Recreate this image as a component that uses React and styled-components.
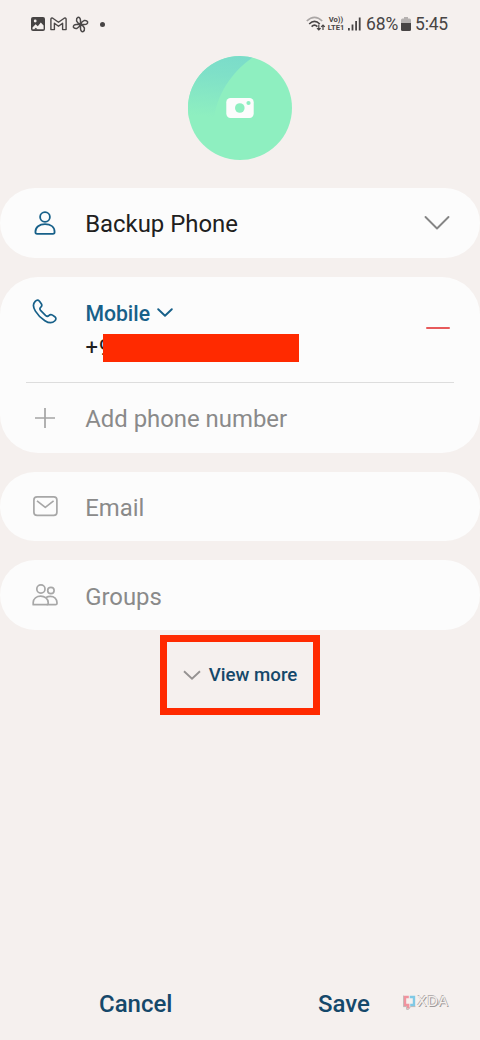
import React from 'react'
import styled, { createGlobalStyle } from 'styled-components'

function Field({icon, label, filled, arrow}) {
    return (
        <Row>
            <IconSlot>{icon}</IconSlot>
            <Label $filled={filled}>{label}</Label>
            {arrow &&
                <Chevron width="26" height="15" viewBox="0 0 26 15">
                    <path d="M1.5 2 L13 13.5 L24.5 2" stroke="#858585" strokeWidth="1.9" />
                </Chevron>
            }
        </Row>
    )
}

function StatusBar() {
    return (
        <Status>
            <Notifications>
                <svg width="14" height="14" viewBox="0 0 14 14">
                    <rect width="14" height="14" rx="2" fill="#474444" />
                    <circle cx="4.2" cy="4" r="1.4" fill="#f5f0ee" />
                    <path d="M1.5 10.5 L4.6 7.3 L6.8 9.3 L9.8 5.6 L12.6 8.5 V12.3 H1.5 Z" fill="#f5f0ee" />
                    <path d="M3 12.4 L4.8 10.8 L6.7 12.4 Z" fill="#474444" />
                </svg>
                <svg width="17" height="14" viewBox="0 0 17 14" fill="none" stroke="#4b4848" strokeWidth="1.4" strokeLinejoin="round">
                    <path d="M.9 12.6 V2.1 Q1.1 .4 2.8 1.2 L8.5 5.3 L14.2 1.2 Q15.9 .4 16.1 2.1 V12.6 H12.6 V6.2 L8.5 9.2 L4.4 6.2 V12.6 Z" />
                </svg>
                <svg width="17" height="17" viewBox="0 0 17 17" fill="none" stroke="#4b4848" strokeWidth="1.5" strokeLinejoin="round">
                    <path d="M8.5 8.5 V4.5 Q8.3 1 5.8 1.4 Q4.2 2.2 4.6 5 Q5.5 7.4 8.5 8.5 Z" />
                    <path d="M8.5 8.5 H12.5 Q16 8.3 15.6 5.8 Q14.8 4.2 12 4.6 Q9.6 5.5 8.5 8.5 Z" />
                    <path d="M8.5 8.5 V12.5 Q8.7 16 11.2 15.6 Q12.8 14.8 12.4 12 Q11.5 9.6 8.5 8.5 Z" />
                    <path d="M8.5 8.5 H4.5 Q1 8.7 1.4 11.2 Q2.2 12.8 5 12.4 Q7.4 11.5 8.5 8.5 Z" />
                </svg>
                <Dot />
            </Notifications>
            <Indicators>
                <svg width="20" height="16" viewBox="0 0 20 16" fill="none" strokeWidth="1.7">
                    <path d="M.8 5 Q8.5 -2.3 16.2 5" stroke="#aaa6a5" />
                    <path d="M3.2 8 Q8.5 2.9 13.8 8" stroke="#474444" />
                    <path d="M5.6 10.6 Q8.5 7.8 11.4 10.6" stroke="#474444" />
                    <path d="M12.8 8.5 V14 M11 12.2 L12.8 14 L14.6 12.2 M17 14 V9 M15.2 10.8 L17 9 L18.8 10.8" stroke="#474444" strokeWidth="1.2" />
                </svg>
                <Volte>
                    <span>Vo))</span>
                    <span>LTE1</span>
                </Volte>
                <Signal width="13" height="14" viewBox="0 0 13 14" fill="#474444">
                    <rect x="0" y="11" width="1.8" height="2.5" />
                    <rect x="3.6" y="7.5" width="1.8" height="6" />
                    <rect x="7.2" y="4" width="1.8" height="9.5" />
                    <rect x="10.8" y="0.5" width="1.8" height="13" />
                </Signal>
                <Reading $width={37}>68%</Reading>
                <Battery width="10" height="14" viewBox="0 0 10 14">
                    <path d="M3 0 H7 V1.5 H8.5 Q10 1.5 10 3 V6 H0 V3 Q0 1.5 1.5 1.5 H3 Z" fill="#b5b1b0" />
                    <path d="M0 6 H10 V12.5 Q10 14 8.5 14 H1.5 Q0 14 0 12.5 Z" fill="#474444" />
                </Battery>
                <Reading $width={37}>5:45</Reading>
            </Indicators>
        </Status>
    )
}

const PersonIcon = () => (
    <svg width="22" height="24" viewBox="0 0 22 24" fill="none" stroke="#176089" strokeWidth="1.8">
        <circle cx="11" cy="6" r="4.9" />
        <path d="M1.4 21 C1.4 16 5.4 13.2 11 13.2 S20.6 16 20.6 21 Q20.6 22.9 18.9 22.9 H3.1 Q1.4 22.9 1.4 21 Z" />
    </svg>
)

const PhoneIcon = () => (
    <svg width="26" height="26" viewBox="0 0 26 26" fill="none" stroke="#176089" strokeWidth="1.7" strokeLinejoin="round">
        <path d="M3.2 2.3 C4.8 .7 6.2 .7 7.5 2.2 L9.3 4.7 C10.2 6.1 9.8 7.4 8.6 8.4 C7.5 9.4 7.7 10.4 8.8 11.7 L13.5 16.3 C14.8 17.5 15.8 17.6 16.8 16.6 C17.9 15.5 19.1 15.2 20.5 16.1 L22.8 17.7 C24.3 19 24.3 20.5 22.7 22 C20.2 24.4 16.6 24.1 12.9 21.7 C9.3 19.4 5.6 15.7 3.4 12.1 C1 8.2 .8 4.7 3.2 2.3 Z" />
    </svg>
)

const PlusIcon = () => (
    <svg width="22" height="22" viewBox="0 0 22 22" stroke="#a4a4a4" strokeWidth="1.7">
        <path d="M1 11 H21 M11 1 V21" />
    </svg>
)

const MailIcon = () => (
    <svg width="26" height="22" viewBox="0 0 26 22" fill="none" stroke="#a7a7a7" strokeWidth="1.7">
        <rect x="1.9" y="1.9" width="23" height="18.5" rx="3.2" />
        <path d="M5 5.9 L13.3 12.3 L21.6 5.9" strokeLinejoin="round" />
    </svg>
)

const GroupIcon = () => (
    <svg width="26" height="24" viewBox="0 0 26 24" fill="none" stroke="#a7a7a7" strokeWidth="1.7" strokeLinejoin="round">
        <circle cx="8.9" cy="6" r="4.1" />
        <circle cx="18.9" cy="7.5" r="3.2" />
        <path d="M1.2 21.7 V19.5 C1.5 15.8 4.6 13.2 8.7 13.2 S16 15.8 16.2 19.5 V20.2 Q16.2 21.7 14.8 21.7 Z" />
        <path d="M14 14.6 Q16 13.4 18.3 13.4 C22.3 13.4 24.9 16 25 19.8 V20.4 Q25 21.7 23.5 21.7 H14.8" />
    </svg>
)

function App() {
    return (
        <Screen>
            <GlobalStyle />
            <StatusBar />

            <Avatar>
                <svg width="104" height="104" viewBox="0 0 104 104">
                    <defs>
                        <linearGradient id="shade" x1="0.6" y1="0" x2="0.5" y2="1">
                            <stop offset="0" stopColor="#7bdcca" />
                            <stop offset="0.3" stopColor="#7fe0c8" />
                            <stop offset="1" stopColor="#8eefc0" />
                        </linearGradient>
                        <clipPath id="round"><circle cx="52" cy="52" r="52" /></clipPath>
                    </defs>
                    <g clipPath="url(#round)">
                        <rect width="104" height="104" fill="#8eefc0" />
                        <path d="M0 0 H67 C48 12 30 34 26 62 H0 Z" fill="url(#shade)" />
                    </g>
                    <rect x="38.3" y="42" width="27.4" height="20" rx="4.2" fill="#fcfcfc" />
                    <circle cx="51.8" cy="52" r="4.8" fill="#8eefc0" />
                    <circle cx="60.5" cy="47" r="2.1" fill="#8eefc0" />
                </svg>
            </Avatar>

            <Cards>
                <Card>
                    <Field icon={<PersonIcon />} label="Backup Phone" filled arrow />
                </Card>
                <Card>
                    <PhoneRow>
                        <IconSlot><PhoneIcon /></IconSlot>
                        <PhoneDetails>
                            <TypePicker>
                                Mobile
                                <svg width="16" height="10" viewBox="0 0 16 10" fill="none" stroke="#176089" strokeWidth="1.9">
                                    <path d="M1.2 1.2 L8 7.7 L14.8 1.2" strokeLinejoin="round" strokeLinecap="round" />
                                </svg>
                            </TypePicker>
                            <Number>
                                +9
                                <Redacted />
                            </Number>
                        </PhoneDetails>
                        <Remove />
                    </PhoneRow>
                    <Divider />
                    <Field icon={<PlusIcon />} label="Add phone number" />
                </Card>
                <Card>
                    <Field icon={<MailIcon />} label="Email" />
                </Card>
                <Card>
                    <Field icon={<GroupIcon />} label="Groups" />
                </Card>
            </Cards>

            <ViewMore>
                <svg width="18" height="11" viewBox="0 0 18 11" fill="none" stroke="#959291" strokeWidth="1.9">
                    <path d="M1 1.3 L9 8.6 L17 1.3" />
                </svg>
                View more
            </ViewMore>

            <Footer>
                <Action $left={99} $width={73}>Cancel</Action>
                <Action $left={146} $width={52}>Save</Action>
                <Brand>
                    <svg width="13" height="15" viewBox="0 0 13 15" fill="none" strokeWidth="2.4">
                        <path d="M5.8 2 H2 V10 H5.2 V13.5" stroke="#f0939e" />
                        <path d="M6.8 2 H11 V10 H7.2" stroke="#80c9e5" />
                        <path d="M.4 .5 V11.6 H3.6 V14.4 H5.5 L7.5 11.6 H12.4" stroke="#aaa5a4" strokeWidth=".7" />
                    </svg>
                    <BrandName>XDA</BrandName>
                </Brand>
            </Footer>
        </Screen>
    )
}

export default App

const GlobalStyle = createGlobalStyle`
    * {
        box-sizing: border-box;
    }
    body {
        margin: 0;
        background: #f5f0ee;
    }
    svg {
        display: block;
        flex-shrink: 0;
    }
`

const Screen = styled.div`
    width: 480px;
    height: 1040px;
    display: flex;
    flex-direction: column;
    align-items: center;
    background: #f5f0ee;
    font-family: Roboto, sans-serif;
    overflow: hidden;
`

const Status = styled.div`
    width: 100%;
    height: 48px;
    padding: 0 32px 0 31px;
    display: flex;
    justify-content: space-between;
    align-items: center;
    color: #474444;
`

const Notifications = styled.div`
    display: flex;
    align-items: center;
    gap: 5px;
`

const Dot = styled.div`
    width: 5px;
    height: 5px;
    margin-left: 6px;
    border-radius: 50%;
    background: #474444;
`

const Indicators = styled.div`
    display: flex;
    align-items: center;
`

const Volte = styled.div`
    width: 18px;
    margin-left: 1px;
    display: flex;
    flex-direction: column;
    align-items: center;
    font-size: 7.6px;
    font-weight: 700;
    line-height: 8px;

    span {
        height: 8px;
        overflow: visible;
    }
`

const Signal = styled.svg`
    margin-left: 3px;
`

const Reading = styled.div`
    width: ${props => props.$width}px;
    font-size: 17.5px;
    line-height: 24px;
    letter-spacing: -0.2px;
    text-align: right;
    white-space: nowrap;
`

const Battery = styled.svg`
    margin-left: 3px;
`

const Avatar = styled.div`
    width: 104px;
    height: 104px;
    margin-top: 8px;
`

const Cards = styled.div`
    width: 100%;
    margin-top: 28.2px;
    padding: 0 0.4px;
    display: flex;
    flex-direction: column;
    gap: 19px;
`

const Card = styled.div`
    background: #fcfcfc;
    border-radius: 38px;
`

const Row = styled.div`
    height: 69.6px;
    padding: 0 29.5px 0 31.6px;
    display: flex;
    align-items: center;
`

const IconSlot = styled.div`
    width: 26px;
    display: flex;
    justify-content: center;
`

const Label = styled.div`
    flex: 1;
    padding-top: 3px;
    margin-left: 27.2px;
    font-size: 23.9px;
    line-height: 30px;
    color: ${props => props.$filled ? '#202020' : '#8a8a8a'};
`

const Chevron = styled.svg`
    fill: none;
    stroke-linejoin: round;
    stroke-linecap: round;
`

const PhoneRow = styled.div`
    height: 105.3px;
    padding: 22px 30px 0 32px;
    display: flex;
    align-items: flex-start;
`

const PhoneDetails = styled.div`
    flex: 1;
    margin-left: 27px;
`

const TypePicker = styled.div`
    height: 29px;
    display: flex;
    align-items: center;
    gap: 7px;
    color: #176089;
    font-size: 21.2px;
    font-weight: 500;
`

const Number = styled.div`
    position: relative;
    height: 28px;
    margin-top: 6.7px;
    font-size: 22px;
    line-height: 28px;
    letter-spacing: 1.2px;
    color: #202020;
`

/* covers the digits after the country prefix */
const Redacted = styled.div`
    position: absolute;
    top: 0;
    left: 17.5px;
    width: 196px;
    height: 28px;
    background: #ff2a00;
`

const Remove = styled.div`
    width: 24px;
    height: 2px;
    margin: 28.5px 0 0;
    border-radius: 1px;
    background: #e75a5b;
`

const Divider = styled.div`
    height: 1px;
    margin: 0 26px;
    background: #dddddd;
`

const ViewMore = styled.div`
    width: 160px;
    height: 80px;
    margin-top: 5.2px;
    border: 7px solid #ff2a00;
    display: flex;
    align-items: center;
    justify-content: center;
    gap: 8px;
    color: #15486a;
    font-size: 18.7px;
    font-weight: 500;
`

const Footer = styled.div`
    width: 100%;
    height: 73px;
    margin-top: auto;
    display: flex;
    align-items: center;
`

const Action = styled.div`
    width: ${props => props.$width}px;
    margin-left: ${props => props.$left}px;
    color: #15486a;
    font-size: 24px;
    font-weight: 500;
    line-height: 30px;
`

const Brand = styled.div`
    margin: 0 0 3px 33px;
    display: flex;
    align-items: center;
    gap: 1px;
`

const BrandName = styled.div`
    margin-top: -2px;
    font-family: "DejaVu Sans", sans-serif;
    font-size: 14px;
    line-height: 14px;
    letter-spacing: 0.6px;
    color: #f5f0ee;
    text-shadow: 1px 1px 0 #9f9a99, -0.6px -0.6px 0 #b5b0af;
`
